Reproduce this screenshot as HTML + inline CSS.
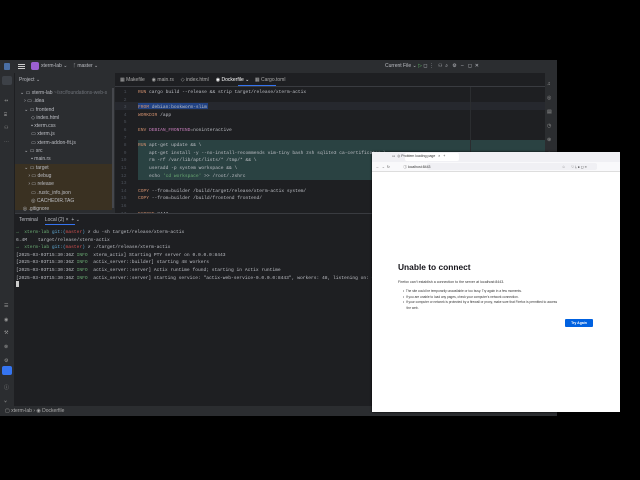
<!DOCTYPE html>
<html><head><meta charset="utf-8"><style>
*{margin:0;padding:0;box-sizing:border-box}
body{width:640px;height:480px;background:#000;position:relative;overflow:hidden;font-family:"Liberation Sans",sans-serif}
.a{position:absolute;white-space:pre}
.m{font-family:"Liberation Mono",monospace;font-size:4.6px;color:#bcbec4;line-height:5px}
.s{font-size:5px;color:#bcbec4;line-height:6px}
.k{color:#cf8e6d}.g{color:#6aab73}.p{color:#c77dbb}.ln{color:#4b5059}
</style></head><body>
<!-- IDE -->
<div class="a" style="left:0;top:60px;width:557px;height:356px;background:#1e1f22"></div>
<div class="a" style="left:0;top:60px;width:557px;height:13px;background:#2b2d30"></div>
<div class="a" style="left:4px;top:63px;width:6px;height:7px;background:#4a6fa5;border-radius:1px"></div>
<div class="a" style="left:18px;top:64px;width:7px;height:1px;background:#ccc;box-shadow:0 2px 0 #ccc,0 4px 0 #ccc"></div>
<div class="a" style="left:31px;top:62px;width:8px;height:8px;background:#9a5fd0;border-radius:2px"></div>
<div class="a s" style="left:41px;top:63px">xterm-lab ⌄  &nbsp; ᚴ master ⌄</div>
<div class="a s" style="left:385px;top:63px">Current File ⌄ <span style="color:#5fb865">▷</span> ◻ ⋮ &nbsp; ⚇ &nbsp;⌕ &nbsp; ⚙ &nbsp; –&nbsp;&nbsp; ◻ &nbsp;✕</div>
<!-- left strip -->
<div class="a" style="left:0;top:73px;width:15px;height:333px;background:#2b2d30;border-right:1px solid #1e1f22"></div>
<div class="a" style="left:2px;top:76px;width:10px;height:9px;background:#3d4147;border-radius:2px"></div>
<div class="a" style="left:2px;top:366px;width:10px;height:9px;background:#3574f0;border-radius:2px"></div>
<div class="a s" style="left:4px;top:95px;color:#999;line-height:13.5px">⇸<br>⌸<br>⚇<br>⋯</div>
<div class="a s" style="left:4px;top:300px;color:#999;line-height:13.7px">☰<br>◉<br>⚒<br>⊗<br>⚙<br><br>ⓘ<br>⑂</div>
<!-- project panel -->
<div class="a" style="left:15px;top:73px;width:100px;height:141px;background:#2b2d30"></div>
<div class="a" style="left:15px;top:164px;width:97px;height:46px;background:#3a3122"></div>
<div class="a s" style="left:19px;top:77px">Project ⌄</div>
<div class="a s" style="left:20px;top:89px;line-height:8.3px">⌄ ▭ xterm-lab <span style="color:#6f737a">~/src/foundations-web-s</span>
   › ▭ .idea
   ⌄ ▭ frontend
        ◇ index.html
        ▪ xterm.css
        ▭ xterm.js
        ▭ xterm-addon-fit.js
   ⌄ ▭ src
        ▪ main.rs
   ⌄ ▭ target
      › ▭ debug
      › ▭ release
        ▭ .rustc_info.json
        ◎ CACHEDIR.TAG
  ◎ .gitignore</div>
<div class="a" style="left:112px;top:88px;width:2px;height:120px;background:#45474c"></div>
<!-- tabs -->
<div class="a" style="left:115px;top:73px;width:430px;height:14px;background:#1e1f22;border-bottom:1px solid #393b40"></div>
<div class="a s" style="left:120px;top:77px;color:#aaa">▦ Makefile &nbsp;&nbsp;&nbsp; ◉ main.rs &nbsp;&nbsp;&nbsp; ◇ index.html &nbsp;&nbsp;&nbsp; <span style="color:#fff">◉ Dockerfile ⌄</span> &nbsp;&nbsp; ▦ Cargo.toml</div>
<div class="a" style="left:238px;top:85px;width:38px;height:1px;background:#3574f0"></div>
<!-- editor -->
<div class="a" style="left:115px;top:102px;width:430px;height:8px;background:#26282e"></div>
<div class="a" style="left:138px;top:140px;width:407px;height:40px;background:#2a4242"></div>
<div class="a" style="left:138px;top:103px;width:70px;height:6px;background:#214283"></div>
<div class="a m ln" style="left:121px;top:89px;line-height:7.6px;text-align:right">1
2
3
4
5
6
7
8
9
10
11
12
13
14
15
16
17</div>
<div class="a m" style="left:138px;top:89px;line-height:7.6px"><span class="k">RUN</span> cargo build --release && strip target/release/xterm-actix

<span class="k">FROM</span> debian:bookworm-slim
<span class="k">WORKDIR</span> /app

<span class="k">ENV</span> <span class="p">DEBIAN_FRONTEND</span>=noninteractive

<span class="k">RUN</span> apt-get update && \
    apt-get install -y --no-install-recommends vim-tiny bash zsh sqlite3 ca-certificates \
    rm -rf /var/lib/apt/lists/* /tmp/* && \
    useradd -p system workspace && \
    echo <span class="g">'cd workspace'</span> >> /root/.zshrc

<span class="k">COPY</span> --from=builder /build/target/release/xterm-actix system/
<span class="k">COPY</span> --from=builder /build/frontend frontend/

<span class="k">EXPOSE</span> 8443</div>
<div class="a" style="left:470px;top:87px;width:1px;height:125px;background:#2b2d30"></div>
<!-- right strip -->
<div class="a" style="left:545px;top:73px;width:12px;height:343px;background:#2b2d30"></div>
<div class="a s" style="left:547px;top:77px;color:#999;line-height:14px">♫<br>◎<br>▤<br>◷<br>⊛<br>◎</div>
<!-- terminal -->
<div class="a" style="left:15px;top:213px;width:530px;height:193px;background:#1e1f22;border-top:1px solid #393b40"></div>
<div class="a s" style="left:19px;top:217px">Terminal &nbsp;&nbsp;&nbsp; Local (2) × &nbsp;+ ⌄</div>
<div class="a" style="left:45px;top:224px;width:30px;height:1px;background:#3574f0"></div>
<div class="a m" style="left:16px;top:229px;line-height:7.6px"><span class="g">→  xterm-lab</span> <span style="color:#5fa8d3">git:(</span><span style="color:#d05050">master</span><span style="color:#5fa8d3">)</span> ✗ du -sh target/release/xterm-actix
6.4M    target/release/xterm-actix
<span class="g">→  xterm-lab</span> <span style="color:#5fa8d3">git:(</span><span style="color:#d05050">master</span><span style="color:#5fa8d3">)</span> ✗ ./target/release/xterm-actix
[2025-03-03T15:30:36Z <span class="g">INFO</span>  xterm_actix] Starting PTY server on 0.0.0.0:8443
[2025-03-03T15:30:36Z <span class="g">INFO</span>  actix_server::builder] starting 48 workers
[2025-03-03T15:30:36Z <span class="g">INFO</span>  actix_server::server] Actix runtime found; starting in Actix runtime
[2025-03-03T15:30:36Z <span class="g">INFO</span>  actix_server::server] starting service: "actix-web-service-0.0.0.0:8443", workers: 48, listening on: 0.0.0.0:8443</div>
<div class="a" style="left:16px;top:281px;width:3px;height:6px;background:#ccc"></div>
<!-- status -->
<div class="a" style="left:0;top:406px;width:557px;height:10px;background:#2b2d30"></div>
<div class="a s" style="left:5px;top:408px;color:#aaa">▢ xterm-lab › ◉ Dockerfile</div>
<!-- browser -->
<div class="a" style="left:372px;top:152px;width:248px;height:260px;background:#fff;box-shadow:0 0 2px #000"></div>
<div class="a" style="left:372px;top:152px;width:248px;height:10px;background:#f0f0f4"></div>
<div class="a" style="left:405px;top:153px;width:54px;height:8px;background:#fff;border-radius:2px"></div>
<div class="a" style="left:372px;top:162px;width:248px;height:10px;background:#f9f9fb;border-bottom:1px solid #ddd"></div>
<div class="a" style="left:427px;top:163px;width:170px;height:7px;background:#f0f0f4;border-radius:2px"></div>
<div class="a" style="font-size:3.5px;left:392px;top:154px;color:#333">▭ &nbsp;◎ Problem loading page &nbsp;&nbsp;× &nbsp; +</div>
<div class="a" style="font-size:3.5px;left:376px;top:164.5px;color:#333">← &nbsp;→ &nbsp;↻ &nbsp;&nbsp;&nbsp;&nbsp;&nbsp;&nbsp;&nbsp;&nbsp;&nbsp;&nbsp;&nbsp;&nbsp;&nbsp;ⓘ localhost:8443</div>
<div class="a" style="font-size:3.5px;left:562px;top:164.5px;color:#333">☆ &nbsp;&nbsp;&nbsp;&nbsp; ♡ ⤓ ● ◻ ≡</div>
<div class="a" style="left:398px;top:262px;font-size:8.4px;font-weight:bold;color:#15141a">Unable to connect</div>
<div class="a" style="left:398px;top:280px;font-size:3.6px;color:#333">Firefox can’t establish a connection to the server at localhost:8443.</div>
<div class="a" style="left:403px;top:289px;font-size:3.2px;color:#333;line-height:5.5px">•  The site could be temporarily unavailable or too busy. Try again in a few moments.
•  If you are unable to load any pages, check your computer’s network connection.
•  If your computer or network is protected by a firewall or proxy, make sure that Firefox is permitted to access
    the web.</div>
<div class="a" style="left:565px;top:319px;width:28px;height:8px;background:#0061e0;border-radius:1px;color:#fff;font-size:3.5px;font-weight:bold;text-align:center;line-height:8px">Try Again</div>
</body></html>
